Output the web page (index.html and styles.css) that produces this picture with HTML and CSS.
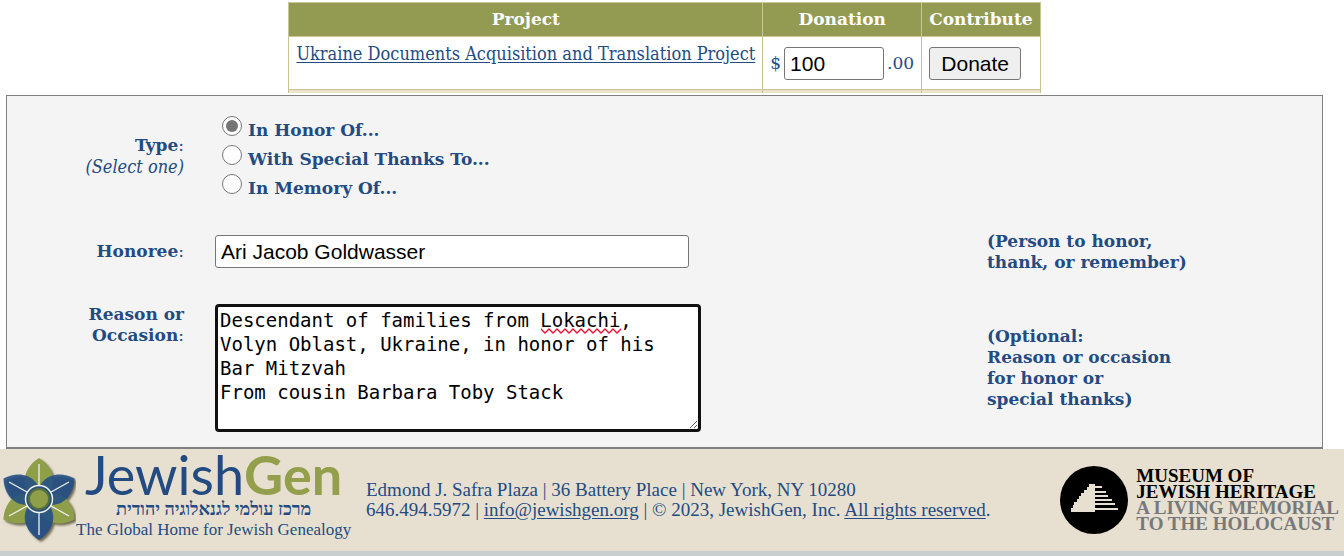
FILE: index.html
```html
<!DOCTYPE html>
<html lang="en">
<head>
  <meta charset="UTF-8">
  <title>JewishGen Donation</title>
  <link rel="stylesheet" href="styles.css">
</head>
<body>

  <form class="donation">
    <table class="project">
      <thead>
        <tr>
          <th>Project</th>
          <th>Donation</th>
          <th>Contribute</th>
        </tr>
      </thead>
      <tbody>
        <tr>
          <td class="title"><a href="#">Ukraine Documents Acquisition and Translation Project</a></td>
          <td>
            <div class="amount">
              <label for="amount">$</label>
              <input type="text" id="amount" value="100">
              <span>.00</span>
            </div>
          </td>
          <td><button type="submit" class="donate">Donate</button></td>
        </tr>
        <tr class="spacer"><td></td><td></td><td></td></tr>
      </tbody>
    </table>

    <div class="details">
      <div class="name" id="typeLabel"><b>Type</b>:<br><i>(Select one)</i></div>
      <div class="types" role="radiogroup" aria-labelledby="typeLabel">
        <label><input type="radio" name="type" checked> In Honor Of...</label>
        <label><input type="radio" name="type"> With Special Thanks To...</label>
        <label><input type="radio" name="type"> In Memory Of...</label>
      </div>
      <div></div>

      <label class="name" for="honoree"><b>Honoree</b>:</label>
      <input type="text" class="honoree" id="honoree" value="Ari Jacob Goldwasser">
      <div class="hint">(Person to honor,<br>thank, or remember)</div>

      <label class="name top" for="reason"><b>Reason or<br>Occasion</b>:</label>
      <div class="reason">
        <textarea id="reason" spellcheck="false">Descendant of families from Lokachi,
Volyn Oblast, Ukraine, in honor of his Bar Mitzvah
From cousin Barbara Toby Stack</textarea>
        <svg class="squiggle" width="80" height="6" aria-hidden="true">
          <defs>
            <pattern id="wave" width="8" height="6" patternUnits="userSpaceOnUse">
              <path d="M-1 0L0 1L4 5L8 1L9 0" fill="none" stroke="#e8112d" stroke-width="1.3"/>
            </pattern>
          </defs>
          <rect width="80" height="6" fill="url(#wave)"/>
        </svg>
      </div>
      <div class="hint">(Optional:<br>Reason or occasion<br>for honor or<br>special thanks)</div>
    </div>
  </form>

  <footer>
    <div class="jewishgen">
      <svg class="flower" width="76" height="88" viewBox="-39 -43 76 88" aria-hidden="true">
        <defs>
          <path id="petal" d="M0 2C-20 -8 -18 -30 0 -41C18 -30 20 -8 0 2Z"/>
        </defs>
        <g class="shadow">
          <use href="#petal"/>
          <use href="#petal" transform="rotate(60)"/>
          <use href="#petal" transform="rotate(120)"/>
          <use href="#petal" transform="rotate(180)"/>
          <use href="#petal" transform="rotate(240)"/>
          <use href="#petal" transform="rotate(300)"/>
        </g>
        <g fill="#8f9f49">
          <use href="#petal"/>
          <use href="#petal" transform="rotate(120)"/>
          <use href="#petal" transform="rotate(240)"/>
        </g>
        <g fill="#204d86" fill-opacity=".87">
          <use href="#petal" transform="rotate(60)"/>
          <use href="#petal" transform="rotate(180)"/>
          <use href="#petal" transform="rotate(300)"/>
        </g>
        <path d="M0 -14V-35M0 14V36M12 -7L30 -17M-12 -7L-30 -17M12 7L30 17M-12 7L-30 17" stroke="#eef2ee" stroke-width="1.3"/>
        <circle r="13.5" fill="#2b507a" stroke="#f2f4f2" stroke-width="1.5"/>
        <circle r="11" fill="#54703f"/>
        <circle r="9" fill="#8f9f49"/>
      </svg>
      <div class="brand">
        <div class="wordmark">Jewish<b>Gen</b></div>
        <div class="hebrew" lang="he" dir="rtl">מרכז עולמי לגנאלוגיה יהודית</div>
        <div class="tagline">The Global Home for Jewish Genealogy</div>
      </div>
    </div>

    <div class="address">
      Edmond J. Safra Plaza | 36 Battery Place | New York, NY 10280<br>
      646.494.5972 | <a href="#">info@jewishgen.org</a> | © 2023, JewishGen, Inc. <a href="#">All rights reserved</a>.
    </div>

    <div class="museum">
      <svg width="68" height="68" viewBox="0 0 68 68" aria-hidden="true">
        <circle cx="34" cy="34" r="34"/>
        <path d="M35 18H29V21H27V24H24V27H21V30H19V33H17V36H14V39H13V42H11V46H35Z" fill="#e7e0d0"/>
        <path d="M35 20H42V22H35ZM35 25H46V27H35ZM35 29H48V31H35ZM35 33H52V35H35ZM35 37H55V39H35ZM35 42H58V44H35Z" fill="#e7e0d0"/>
      </svg>
      <div class="museum-name">
        MUSEUM OF<br>JEWISH HERITAGE<br>
        <span>A LIVING MEMORIAL<br>TO THE HOLOCAUST</span>
      </div>
    </div>
  </footer>

</body>
</html>
```
FILE: styles.css
```css
* {
  box-sizing: border-box;
}

body {
  margin: 0;
  background: #fff;
  color: #234b82;
  font-family: Georgia, "DejaVu Serif", serif;
  font-size: 17px;
  line-height: 21px;
}

a {
  color: inherit;
  text-underline-offset: 2px;
}

.donation {
  margin: 0 21px 0 6px;
  padding-top: 2px;
}

/* Project table */
.project {
  margin: 0 auto 2px;
  border-collapse: collapse;
}

.project th {
  height: 34px;
  padding: 0 7px;
  background: #939b53;
  border: 1px solid #c9c795;
  color: #fff;
}

.project td {
  padding: 10px 7px 9px;
  border: 1px solid #c9c18f;
  vertical-align: top;
}

.project .title {
  padding-top: 6px;
  font-family: Georgia, "DejaVu Serif Condensed", serif;
  font-size: 18px;
}

.project .spacer td {
  height: 3px;
  padding: 0;
  background: #e9e5cd;
  border-bottom: 0;
}

.amount {
  display: flex;
  align-items: center;
  gap: 3px;
}

input[type="text"] {
  height: 33px;
  padding: 0 5px;
  background: #fff;
  border: 1px solid #767676;
  border-radius: 3px;
  color: #000;
  font-family: Arial, "Liberation Sans", sans-serif;
  font-size: 21px;
}

#amount {
  width: 100px;
}

.donate {
  width: 92px;
  height: 33px;
  padding: 0;
  background: #efefef;
  border: 1px solid #767676;
  border-radius: 3px;
  color: #000;
  font-family: Arial, "Liberation Sans", sans-serif;
  font-size: 21px;
}

/* Honoree details */
.details {
  display: grid;
  grid-template-columns: 177px 1fr 335px;
  gap: 31px;
  align-items: center;
  padding: 17px 0 15px;
  background: #f4f4f4;
  border: 1px solid #808080;
  border-bottom-width: 2px;
}

.name {
  text-align: right;
}

.name i {
  font-family: Georgia, "DejaVu Serif Condensed", serif;
  font-size: 18px;
}

.name.top {
  align-self: start;
}

.types {
  padding-left: 7px;
}

.types label {
  display: flex;
  gap: 6px;
  height: 29px;
  font-weight: bold;
  line-height: 35px;
}

.types input {
  width: 20px;
  height: 20px;
  margin: 3px 0 0;
  accent-color: #757575;
}

.honoree {
  width: 64%;
}

.hint {
  font-weight: bold;
}

.reason {
  position: relative;
  width: 486px;
}

.reason textarea {
  display: block;
  width: 100%;
  height: 128px;
  padding: 1px 2px;
  background: #fff;
  border: 3px solid #101010;
  border-radius: 4px;
  outline: 0;
  color: #000;
  font-family: Consolas, "DejaVu Sans Mono", monospace;
  font-size: 19px;
  line-height: 24px;
}

.squiggle {
  position: absolute;
  top: 24px;
  left: 326px;
}

/* Footer */
footer {
  display: flex;
  align-items: center;
  height: 107px;
  background: #e7e0d0;
  border-bottom: 5px solid #c9cecf;
}

.jewishgen {
  display: flex;
  align-items: center;
  width: 366px;
}

.flower {
  flex: none;
}

.shadow {
  fill: #6f6a55;
  filter: blur(1px);
  transform: translate(2px, 2px);
}

.brand {
  display: flex;
  flex-direction: column;
  align-items: center;
  padding-bottom: 8px;
  white-space: nowrap;
}

.wordmark {
  font-family: Lato, sans-serif;
  font-size: 54px;
  line-height: 48px;
}

.wordmark b {
  color: #939f4b;
}

.hebrew {
  font-family: "Liberation Serif", serif;
  font-size: 18px;
  font-weight: bold;
  line-height: 20px;
}

.tagline {
  font-family: "Liberation Serif", serif;
  font-size: 17px;
  line-height: 22px;
}

.address {
  flex: 1;
  font-family: Georgia, "Liberation Serif", serif;
  font-size: 19px;
  line-height: 20px;
}

.museum {
  display: flex;
  align-items: center;
  gap: 8px;
  padding-right: 5px;
}

.museum-name {
  color: #000;
  font-family: "Liberation Serif", serif;
  font-size: 19px;
  font-weight: bold;
  line-height: 16px;
  white-space: nowrap;
}

.museum-name span {
  color: #77797b;
}
```
